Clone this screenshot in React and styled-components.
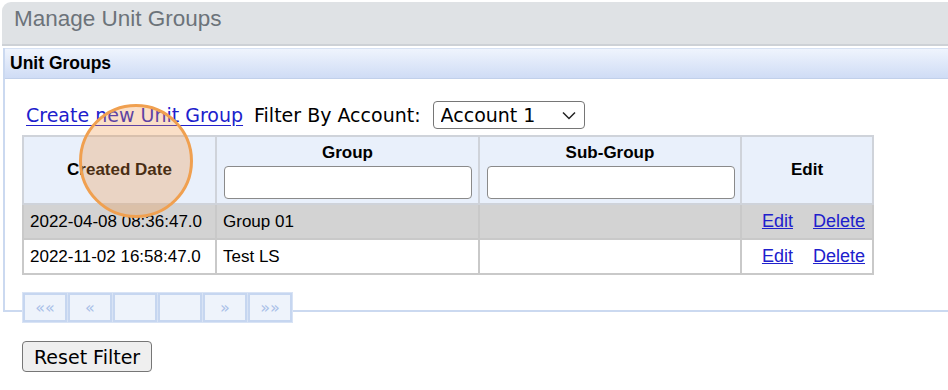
import React from "react";
import styled, { createGlobalStyle } from "styled-components";

const GlobalStyle = createGlobalStyle`
  body {
    margin: 0;
    background: #ffffff;
    font-family: "Liberation Sans", Arial, sans-serif;
  }
`;

const rows = [
  { date: "2022-04-08 08:36:47.0", group: "Group 01", sub: "", shaded: true },
  { date: "2022-11-02 16:58:47.0", group: "Test LS", sub: "", shaded: false },
];

const pages = ["««", "«", "", "", "»", "»»"];

const App = () => {
  return (
    <React.Fragment>
      <GlobalStyle />
      <Page>
        <TitleBar>Manage Unit Groups</TitleBar>
        <Panel>
          <PanelHeader>Unit Groups</PanelHeader>
          <PanelBody>
            <Toolbar>
              <Link href="#">Create new Unit Group</Link>
              <Label>Filter By Account:</Label>
              <SelectWrap>
                <Select defaultValue="1">
                  <option value="1">Account 1</option>
                  <option value="2">Account 2</option>
                </Select>
                <Chevron width="14" height="9" viewBox="0 0 14 9">
                  <path d="M1 1.5 L7 7.5 L13 1.5" fill="none" stroke="#222" strokeWidth="1.5" />
                </Chevron>
              </SelectWrap>
            </Toolbar>
            <Table>
              <colgroup>
                <col style={{ width: 193 }} />
                <col style={{ width: 263 }} />
                <col style={{ width: 262 }} />
                <col style={{ width: 132 }} />
              </colgroup>
              <thead>
                <tr>
                  <Th>Created Date</Th>
                  <Th>
                    <HeadLabel>Group</HeadLabel>
                    <FilterInput type="text" />
                  </Th>
                  <Th>
                    <HeadLabel>Sub-Group</HeadLabel>
                    <FilterInput type="text" />
                  </Th>
                  <Th>Edit</Th>
                </tr>
              </thead>
              <tbody>
                {rows.map((r) => (
                  <Tr key={r.date} shaded={r.shaded}>
                    <Td>{r.date}</Td>
                    <Td>{r.group}</Td>
                    <Td>{r.sub}</Td>
                    <ActionTd>
                      <RowLink href="#">Edit</RowLink>
                      <RowLink href="#">Delete</RowLink>
                    </ActionTd>
                  </Tr>
                ))}
              </tbody>
            </Table>
            <Pager>
              {pages.map((p, i) => (
                <PageCell key={i}>{p}</PageCell>
              ))}
            </Pager>
          </PanelBody>
        </Panel>
        <ResetButton>Reset Filter</ResetButton>
        <Highlight />
      </Page>
    </React.Fragment>
  );
};

export default App;

const Page = styled.div`
  position: relative;
  padding-top: 2px;
  height: 388px;
  overflow: hidden;
`;

const TitleBar = styled.div`
  margin-left: 2px;
  height: 42px;
  padding-left: 12px;
  background: #dfe2e5;
  border-top-left-radius: 9px;
  border-bottom: 2px solid #cdd1d6;
  color: #6c737a;
  font-size: 22.5px;
  line-height: 34px;
`;

const Panel = styled.div`
  margin-top: 2px;
  margin-left: 3px;
  border-left: 2px solid #cbd9f0;
  border-bottom: 2px solid #cbd9f0;
`;

const PanelHeader = styled.div`
  height: 29px;
  padding-left: 5px;
  background: linear-gradient(#eff4fd, #cfdcf5);
  border-top: 1px solid #d6e1f3;
  border-bottom: 1px solid #c1d0ea;
  font-weight: bold;
  font-size: 17.5px;
  line-height: 29px;
  color: #000;
`;

const PanelBody = styled.div`
  padding: 22px 0 0 17px;
  margin-bottom: -13px;
`;

const Toolbar = styled.div`
  display: flex;
  align-items: center;
  height: 28px;
  padding-left: 4px;
  font-family: "DejaVu Sans", Verdana, sans-serif;
  font-size: 19px;
`;

const Link = styled.a`
  color: #2020cc;
  text-decoration: underline;
  text-underline-offset: 3px;
`;

const Label = styled.span`
  margin-left: 11px;
  margin-right: 12px;
  color: #000;
`;

const SelectWrap = styled.div`
  position: relative;
  display: inline-flex;
`;

const Select = styled.select`
  appearance: none;
  width: 152px;
  height: 28px;
  padding: 0 0 0 7px;
  border: 1px solid #767676;
  border-radius: 4px;
  background: #fff;
  color: #000;
  font-family: "DejaVu Sans", Verdana, sans-serif;
  font-size: 19px;
`;

const Chevron = styled.svg`
  position: absolute;
  right: 9px;
  top: 10px;
  pointer-events: none;
`;

const Table = styled.table`
  margin-top: 6px;
  width: 850px;
  border-collapse: collapse;
  table-layout: fixed;
  border: 2px solid #c9c9c9;
  font-size: 17px;
`;

const Th = styled.th`
  height: 66px;
  padding: 0 7px;
  background: #e9f0fb;
  border: 2px solid #cfd3da;
  font-size: 17px;
  font-weight: bold;
  text-align: center;
  vertical-align: middle;
  color: #000;
`;

const HeadLabel = styled.div`
  line-height: 20px;
  margin-top: 2px;
  margin-bottom: 3px;
`;

const FilterInput = styled.input`
  box-sizing: border-box;
  display: block;
  width: 248px;
  height: 33px;
  border: 1px solid #8a8a8a;
  border-radius: 4px;
  background: #fff;
`;

const Tr = styled.tr`
  background: ${(props) => (props.shaded ? "#d3d3d3" : "#ffffff")};
`;

const Td = styled.td`
  height: 33px;
  padding: 0 6px;
  border: 2px solid #c9c9c9;
  color: #000;
  white-space: nowrap;
`;

const ActionTd = styled(Td)`
  text-align: right;
  padding-right: 7px;
`;

const RowLink = styled.a`
  color: #2020cc;
  text-decoration: underline;
  font-size: 18px;
  & + & {
    margin-left: 20px;
  }
`;

const Pager = styled.div`
  position: relative;
  display: flex;
  gap: 1px;
  width: 271px;
  margin-top: 17px;
  padding: 1px;
  box-sizing: border-box;
  background: #d8e3f5;
`;

const PageCell = styled.div`
  box-sizing: border-box;
  width: 44px;
  height: 29px;
  border: 2px solid #c6d6f0;
  background: #eef3fb;
  color: #a9c0e8;
  font-family: "DejaVu Sans", Verdana, sans-serif;
  font-size: 16px;
  line-height: 25px;
  text-align: center;
`;

const ResetButton = styled.button`
  margin: 29px 0 0 22px;
  height: 31px;
  padding: 0 11px;
  border: 1px solid #767676;
  border-radius: 4px;
  background: #efefef;
  color: #000;
  font-family: "DejaVu Sans", Verdana, sans-serif;
  font-size: 19px;
`;

const Highlight = styled.div`
  position: absolute;
  left: 79px;
  top: 104px;
  width: 108px;
  height: 108px;
  border: 3px solid #f0a050;
  border-radius: 50%;
  background: rgba(240, 150, 70, 0.3);
  pointer-events: none;
`;
